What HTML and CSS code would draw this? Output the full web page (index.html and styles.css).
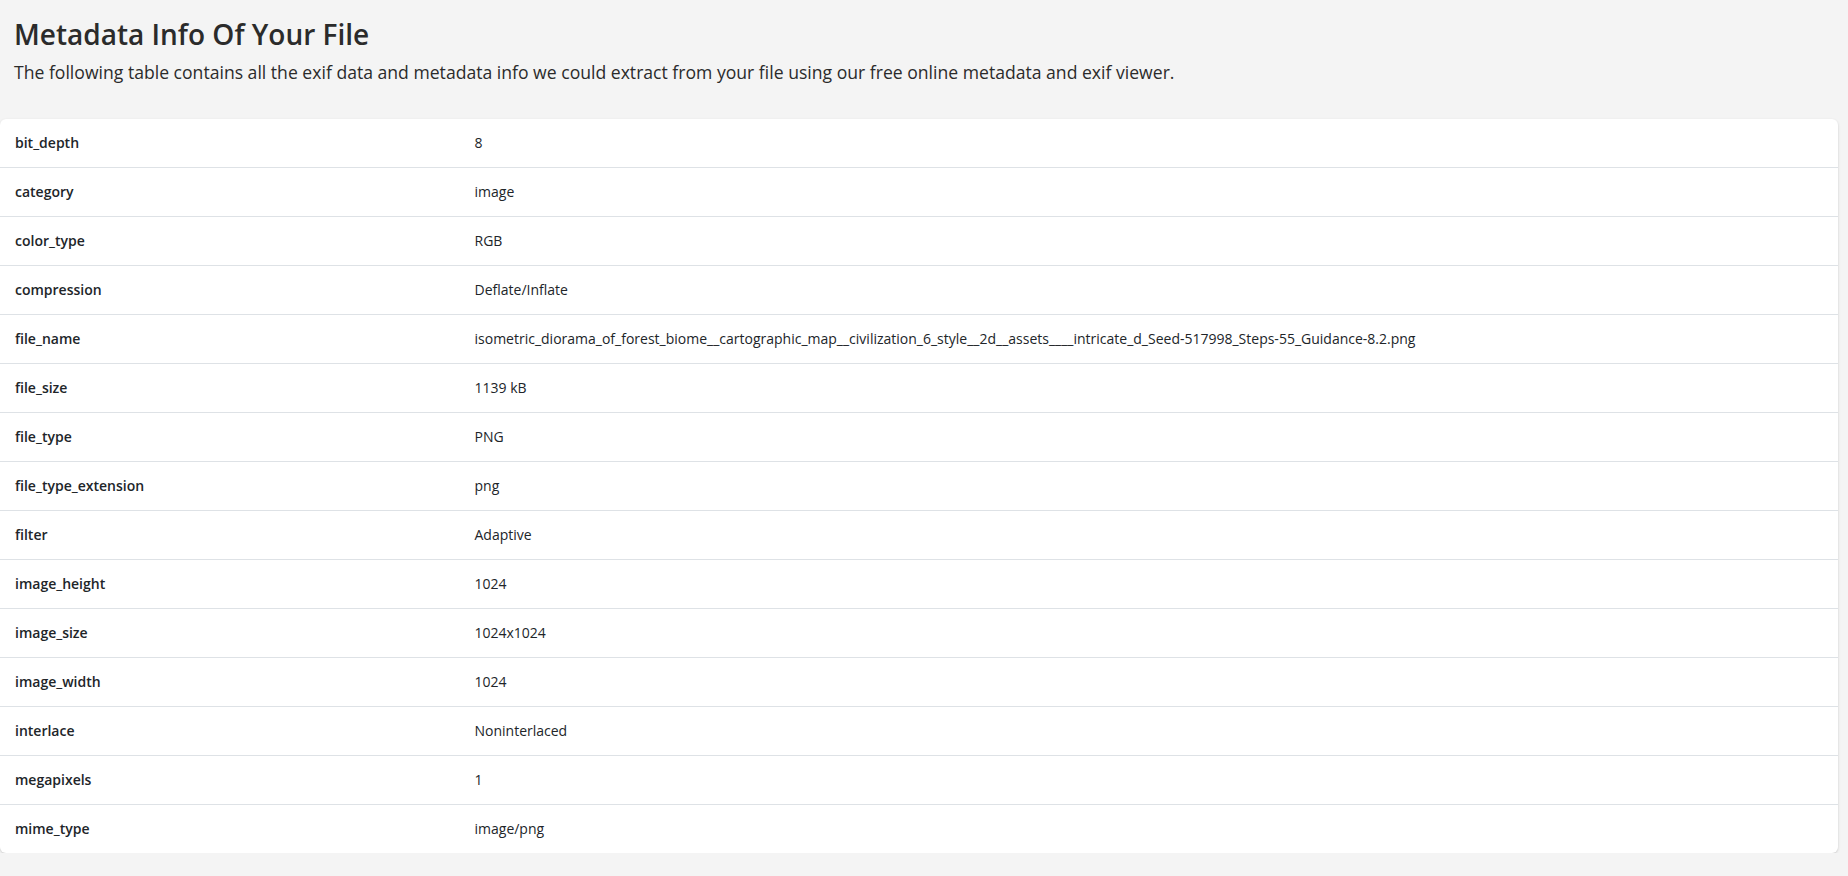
FILE: index.html
```html
<!DOCTYPE html>
<html lang="en">
<head>
<meta charset="utf-8">
<title>Metadata Info Of Your File</title>
<link rel="stylesheet" href="styles.css">
</head>
<body>
<div class="page">
  <header class="intro">
    <h1 class="title">Metadata Info Of Your File</h1>
    <p class="lead">The following table contains all the exif data and metadata info we could extract from your file using our free online metadata and exif viewer.</p>
  </header>
  <div class="card">
    <table class="meta">
      <tbody>
        <tr><th>bit_depth</th><td>8</td></tr>
        <tr><th>category</th><td>image</td></tr>
        <tr><th>color_type</th><td>RGB</td></tr>
        <tr><th>compression</th><td>Deflate/Inflate</td></tr>
        <tr><th>file_name</th><td>isometric_diorama_of_forest_biome__cartographic_map__civilization_6_style__2d__assets____intricate_d_Seed-517998_Steps-55_Guidance-8.2.png</td></tr>
        <tr><th>file_size</th><td>1139 kB</td></tr>
        <tr><th>file_type</th><td>PNG</td></tr>
        <tr><th>file_type_extension</th><td>png</td></tr>
        <tr><th>filter</th><td>Adaptive</td></tr>
        <tr><th>image_height</th><td>1024</td></tr>
        <tr><th>image_size</th><td>1024x1024</td></tr>
        <tr><th>image_width</th><td>1024</td></tr>
        <tr><th>interlace</th><td>Noninterlaced</td></tr>
        <tr><th>megapixels</th><td>1</td></tr>
        <tr><th>mime_type</th><td>image/png</td></tr>
      </tbody>
    </table>
  </div>
</div>
</body>
</html>
```
FILE: styles.css
```css
html, body {
  margin: 0;
  padding: 0;
  background: #f4f4f4;
}
body {
  font-family: "Open Sans", "Liberation Sans", sans-serif;
  color: #212529;
}
.page {
  padding: 0 10px 0 0;
}
.intro {
  padding: 18px 15px 0 14px;
}
.title {
  margin: 0;
  font-size: 28px;
  line-height: 1.2;
  font-weight: 600;
  color: #2b2b2b;
}
.lead {
  margin: 7px 0 0;
  font-size: 17.6px;
  line-height: 27px;
  color: #2b2b2b;
}
.card {
  margin-top: 33.5px;
  background: #fff;
  border-radius: 6px;
  box-shadow: 0 1px 3px rgba(0,0,0,0.12), 0 1px 2px rgba(0,0,0,0.06);
  overflow: hidden;
}
.meta {
  width: 100%;
  border-collapse: collapse;
  font-size: 14px;
  line-height: 20px;
}
.meta th,
.meta td {
  text-align: left;
  padding: 14px 15px;
  vertical-align: middle;
}
.meta th {
  width: 25%;
  font-weight: 600;
  color: #212529;
}
.meta td {
  font-weight: 400;
  color: #212529;
}
.meta tr + tr th,
.meta tr + tr td {
  border-top: 1px solid #dee2e6;
}
```
